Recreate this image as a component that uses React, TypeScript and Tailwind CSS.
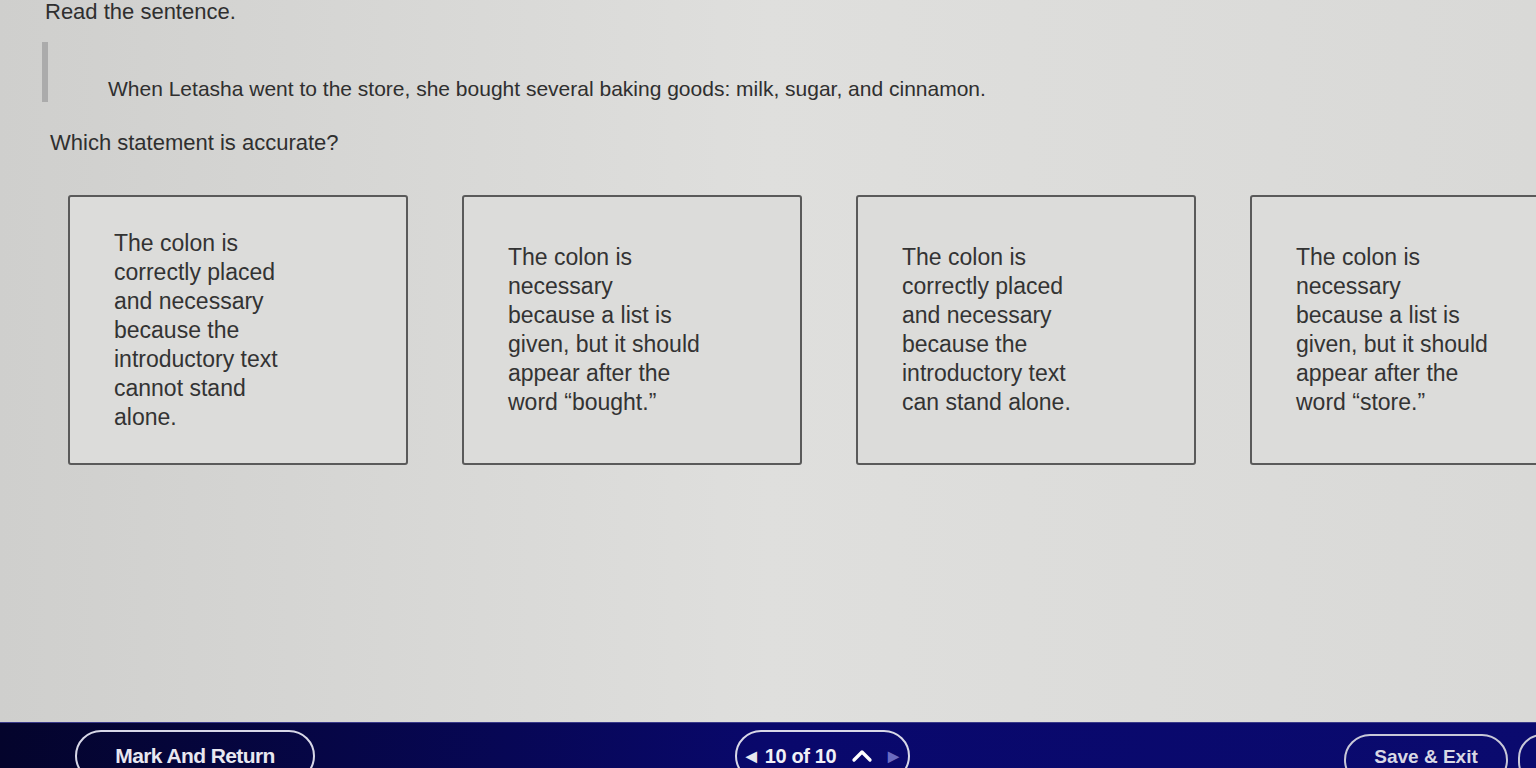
import { ChevronUp } from 'lucide-react'

const choices = [
  [
    'The colon is',
    'correctly placed',
    'and necessary',
    'because the',
    'introductory text',
    'cannot stand',
    'alone.',
  ],
  [
    'The colon is',
    'necessary',
    'because a list is',
    'given, but it should',
    'appear after the',
    'word \u201cbought.\u201d',
  ],
  [
    'The colon is',
    'correctly placed',
    'and necessary',
    'because the',
    'introductory text',
    'can stand alone.',
  ],
  [
    'The colon is',
    'necessary',
    'because a list is',
    'given, but it should',
    'appear after the',
    'word \u201cstore.\u201d',
  ],
]

function ChoiceCard({ lines }: { lines: string[] }) {
  return (
    <button className="flex h-[270px] w-[340px] shrink-0 items-center rounded-[3px] border-2 border-[#5a5a5a] bg-[#dcdcda] pl-[44px] text-left">
      <span className="text-[23px] leading-[29px] text-[#333]">
        {lines.map((l, i) => (
          <span key={i} className="block">
            {l}
          </span>
        ))}
      </span>
    </button>
  )
}

export default function App() {
  return (
    <div
      className="flex h-screen w-full flex-col overflow-hidden"
      style={{ fontFamily: '"Liberation Sans", Arial, sans-serif' }}
    >
      {/* Question area */}
      <div className="min-h-0 flex-1 bg-gradient-to-r from-[#cfcfcd] via-[#dfdfdd] to-[#d9d9d7]">
        <p className="pl-[45px] text-[22px] leading-[24px] text-[#2f2f2f]">Read the sentence.</p>

        <div className="ml-[42px] mt-[18px] flex h-[60px] items-end border-l-[6px] border-[#ababab] pl-[60px]">
          <p className="text-[21px] leading-[26px] text-[#2f2f2f]">
            When Letasha went to the store, she bought several baking goods: milk, sugar, and cinnamon.
          </p>
        </div>

        <p className="mt-[24px] pl-[50px] text-[22px] text-[#2f2f2f]">Which statement is accurate?</p>

        <div className="mt-[36px] flex gap-[54px] pl-[68px]">
          {choices.map((lines, i) => (
            <ChoiceCard key={i} lines={lines} />
          ))}
        </div>
      </div>

      {/* Bottom toolbar */}
      <div className="flex h-[46px] shrink-0 items-start overflow-hidden border-t border-[#3a3a8a] bg-gradient-to-r from-[#04042c] via-[#09086c] to-[#0a0a6e] text-white">
        <button className="ml-[75px] mt-[7px] flex h-[52px] w-[240px] shrink-0 items-center justify-center rounded-full border-2 border-[#d8d8e8] text-[21px] font-bold tracking-[-0.6px] text-[#e8e8f0]">
          Mark And Return
        </button>

        <div className="ml-[420px] mt-[7px] flex h-[52px] w-[175px] shrink-0 items-center justify-center gap-[8px] rounded-full border-2 border-[#d8d8e8] text-[20px] font-bold tracking-[-0.4px]">
          <span className="text-[14px] text-[#e8e8f0]">{'\u25C0'}</span>
          <span className="text-[#f0f0f6]">10 of 10</span>
          <ChevronUp className="h-[32px] w-[36px] text-white" strokeWidth={2.5} />
          <span className="text-[14px] text-[#6b6bc0]">{'\u25B6'}</span>
        </div>

        <button className="ml-auto mt-[11px] flex h-[52px] w-[164px] shrink-0 items-start justify-center rounded-full border-2 border-[#c8c8d8] pt-[7px] text-[19px] font-bold text-[#d8d8e4]">
          Save &amp; Exit
        </button>
        <div className="ml-[10px] mr-[-30px] mt-[11px] h-[52px] w-[48px] shrink-0 rounded-full border-2 border-[#c8c8d8]" />
      </div>
    </div>
  )
}
